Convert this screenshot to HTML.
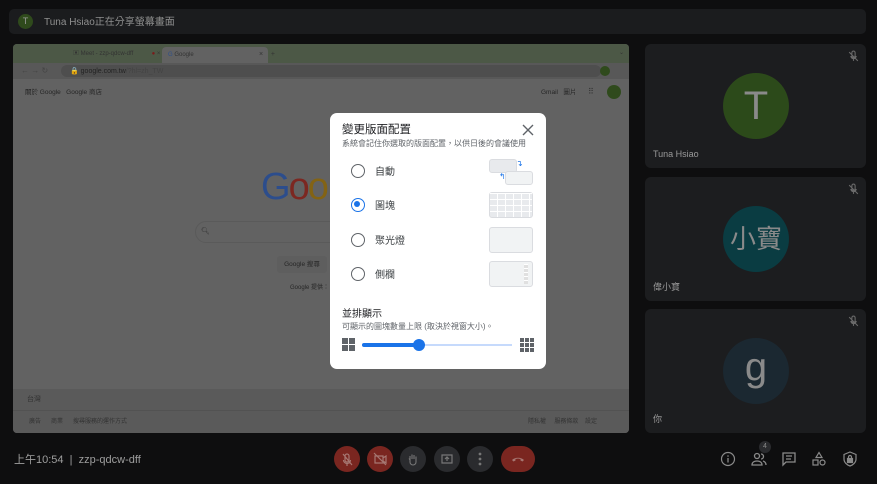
<!DOCTYPE html>
<html><head><meta charset="utf-8"><style>
*{margin:0;padding:0;box-sizing:border-box;line-height:1}
body{width:877px;height:484px;background:#0e0e0f;position:relative;overflow:hidden;font-family:"Liberation Sans","Noto Sans CJK TC",sans-serif}
.a{position:absolute}
.tile{position:absolute;left:645px;width:221px;height:124px;background:#1c1d1f;border-radius:6px}
.av{position:absolute;left:78px;top:29px;width:66px;height:66px;border-radius:50%;color:#8a8a8a;text-align:center;line-height:66px;font-size:40px}
.nm{position:absolute;left:8px;bottom:9px;color:#9a9a9a;font-size:9px}
.mic{position:absolute;right:6px;top:6px;width:13px;height:13px}
.rad{position:absolute;left:21px;width:14px;height:14px;border:1.6px solid #5f6368;border-radius:50%}
.lbl{position:absolute;left:45px;font-size:10px;color:#3c4043}
.thumb{position:absolute;left:159px;width:44px;height:26px;border:1px solid #dadce0;border-radius:3px;background:#f1f3f4}
.btn{position:absolute;top:446px;width:26px;height:26px;border-radius:50%;background:#2a2b2e}
.btn svg,.ri svg{display:block;margin:auto}
.ri{position:absolute;top:451px;width:16px;height:16px}
</style></head><body>
<div class="a" style="left:9px;top:9px;width:857px;height:25px;background:#1b1c1e;border-radius:5px"></div>
<div class="a" style="left:18px;top:14px;width:15px;height:15px;border-radius:50%;background:#2f4a1c;color:#999;font-size:9px;text-align:center;line-height:15px">T</div>
<div class="a" style="left:44px;top:18px;color:#8f8f8f;font-size:10px">Tuna Hsiao正在分享螢幕畫面</div>

<div class="a" style="left:13px;top:44px;width:616px;height:389px;background:#626262;border-radius:4px;overflow:hidden">
  <div class="a" style="left:0;top:0;width:616px;height:19px;background:#4c5846"></div>
  <div class="a" style="left:60px;top:7px;font-size:6px;color:#333">▣ Meet - zzp-qdcw-dff &nbsp;&nbsp;&nbsp;&nbsp;&nbsp;&nbsp;&nbsp;&nbsp;&nbsp;&nbsp;<span style="color:#7a1a1a">●</span> ×</div>
  <div class="a" style="left:149px;top:3px;width:106px;height:16px;background:#626262;border-radius:4px 4px 0 0"></div>
  <div class="a" style="left:155px;top:8px;font-size:6px;color:#333"><span style="color:#2d4f8a">G</span> Google</div>
  <div class="a" style="left:246px;top:7px;font-size:7px;color:#333">×&nbsp;&nbsp;&nbsp;&nbsp;+</div>
  <div class="a" style="left:606px;top:6px;font-size:6px;color:#333">⌄</div>
  <div class="a" style="left:0;top:19px;width:616px;height:16px;background:#585858"></div>
  <div class="a" style="left:8px;top:23px;font-size:8px;color:#444">← → ↻</div>
  <div class="a" style="left:48px;top:21px;width:540px;height:12px;border-radius:6px;background:#4e4e4e"></div>
  <div class="a" style="left:57px;top:24px;font-size:7px;color:#222">🔒 google.com.tw<span style="color:#444">/?hl=zh_TW</span></div>
  <div class="a" style="left:587px;top:22px;width:10px;height:10px;border-radius:50%;background:#2f4a1c"></div>
  <div class="a" style="left:12px;top:46px;font-size:6.5px;color:#262626">關於 Google &nbsp;&nbsp;Google 商店</div>
  <div class="a" style="left:528px;top:46px;font-size:6.5px;color:#262626">Gmail&nbsp;&nbsp;&nbsp;圖片</div>
  <div class="a" style="left:575px;top:44px;font-size:8px;color:#333">⠿</div>
  <div class="a" style="left:594px;top:41px;width:14px;height:14px;border-radius:50%;background:#2f4a1c"></div>
  <div class="a" style="left:248px;top:124px;font-size:38px;letter-spacing:-2px"><span style="color:#2c4d8c">G</span><span style="color:#7c2721">o</span><span style="color:#836314">o</span></div>
  <div class="a" style="left:182px;top:177px;width:200px;height:22px;border:1px solid #5a5a5a;border-radius:11px"></div>
  <div class="a" style="left:188px;top:184px;font-size:7px;color:#333">🔍︎</div>
  <div class="a" style="left:264px;top:212px;width:50px;height:17px;background:#5e5e5e;border-radius:3px;font-size:6.5px;color:#262626;text-align:center;line-height:17px">Google 搜尋</div>
  <div class="a" style="left:277px;top:241px;font-size:6px;color:#262626">Google 提供：</div>
  <div class="a" style="left:0;top:345px;width:616px;height:44px;background:#5a5a5a"></div>
  <div class="a" style="left:0;top:366px;width:616px;height:1px;background:#525252"></div>
  <div class="a" style="left:14px;top:352px;font-size:7px;color:#333">台灣</div>
  <div class="a" style="left:16px;top:375px;font-size:6px;color:#333">廣告 &nbsp;&nbsp;&nbsp;&nbsp;&nbsp;商業 &nbsp;&nbsp;&nbsp;&nbsp;&nbsp;搜尋服務的運作方式</div>
  <div class="a" style="left:515px;top:375px;font-size:6px;color:#333">隱私權 &nbsp;&nbsp;&nbsp;&nbsp;服務條款 &nbsp;&nbsp;&nbsp;設定</div>
</div>

<div class="tile" style="top:44px"><div class="av" style="background:#2c4a1a">T</div><div class="nm">Tuna Hsiao</div>
<svg class="mic" viewBox="0 0 24 24"><path d="M12 14a3 3 0 0 0 3-3V5a3 3 0 0 0-6 0v6a3 3 0 0 0 3 3zm5-3a5 5 0 0 1-10 0M12 16v4M4 4l16 16" stroke="#6a6a6a" stroke-width="2" fill="none"/></svg></div>
<div class="tile" style="top:177px"><div class="av" style="background:#0a3c42;font-size:26px">小寶</div><div class="nm">偉小寶</div>
<svg class="mic" viewBox="0 0 24 24"><path d="M12 14a3 3 0 0 0 3-3V5a3 3 0 0 0-6 0v6a3 3 0 0 0 3 3zm5-3a5 5 0 0 1-10 0M12 16v4M4 4l16 16" stroke="#6a6a6a" stroke-width="2" fill="none"/></svg></div>
<div class="tile" style="top:309px"><div class="av" style="background:#1b2831;line-height:58px">g</div><div class="nm">你</div>
<svg class="mic" viewBox="0 0 24 24"><path d="M12 14a3 3 0 0 0 3-3V5a3 3 0 0 0-6 0v6a3 3 0 0 0 3 3zm5-3a5 5 0 0 1-10 0M12 16v4M4 4l16 16" stroke="#6a6a6a" stroke-width="2" fill="none"/></svg></div>

<div class="a" style="left:330px;top:113px;width:216px;height:256px;background:#fff;border-radius:7px">
  <div class="a" style="left:12px;top:12px;font-size:11.5px;color:#202124">變更版面配置</div>
  <div class="a" style="left:12px;top:27px;font-size:8px;color:#5f6368">系統會記住你選取的版面配置，以供日後的會議使用</div>
  <svg class="a" style="left:192px;top:11px" width="12" height="12" viewBox="0 0 12 12"><path d="M1 1l10 10M11 1L1 11" stroke="#5f6368" stroke-width="1.4"/></svg>
  <div class="rad" style="top:51px"></div><div class="lbl" style="top:55px">自動</div>
  <div class="rad" style="top:85px;border-color:#1a73e8"><div style="position:absolute;left:2.4px;top:2.4px;width:6px;height:6px;border-radius:50%;background:#1a73e8"></div></div><div class="lbl" style="top:89px">圖塊</div>
  <div class="rad" style="top:120px"></div><div class="lbl" style="top:124px">聚光燈</div>
  <div class="rad" style="top:154px"></div><div class="lbl" style="top:158px">側欄</div>
  <div class="thumb" style="top:46px;width:28px;height:14px;background:#e8eaed"></div>
  <div class="thumb" style="top:58px;left:175px;width:28px;height:14px"></div>
  <div class="a" style="left:186px;top:47px;font-size:8px;color:#1a73e8">↴</div>
  <div class="a" style="left:169px;top:60px;font-size:8px;color:#1a73e8">↰</div>
  <div class="thumb" style="top:79px;background:repeating-linear-gradient(90deg,#e8eaed 0 7px,#fff 7px 8px),#e8eaed"><div style="position:absolute;inset:0;background:repeating-linear-gradient(0deg,transparent 0 5px,#fff 5px 6px)"></div></div>
  <div class="thumb" style="top:114px"></div>
  <div class="thumb" style="top:148px"><div style="position:absolute;right:4px;top:2px;width:4px;height:20px;background:repeating-linear-gradient(0deg,#e0e0e0 0 3px,#fff 3px 4px)"></div></div>
  <div class="a" style="left:12px;top:197px;font-size:10px;color:#202124">並排顯示</div>
  <div class="a" style="left:12px;top:210px;font-size:8px;color:#5f6368">可顯示的圖塊數量上限 (取決於視窗大小)。</div>
  <svg class="a" style="left:12px;top:225px" width="13" height="13" viewBox="0 0 13 13" fill="#5f6368"><rect x="0" y="0" width="6" height="6"/><rect x="7" y="0" width="6" height="6"/><rect x="0" y="7" width="6" height="6"/><rect x="7" y="7" width="6" height="6"/></svg>
  <div class="a" style="left:32px;top:231px;width:150px;height:2px;background:#c6dafc"></div>
  <div class="a" style="left:32px;top:230px;width:58px;height:4px;background:#1a73e8;border-radius:2px"></div>
  <div class="a" style="left:83px;top:226px;width:12px;height:12px;border-radius:50%;background:#1a73e8"></div>
  <svg class="a" style="left:190px;top:225px" width="14" height="14" viewBox="0 0 14 14" fill="#5f6368"><rect x="0" y="0" width="4" height="4"/><rect x="5" y="0" width="4" height="4"/><rect x="10" y="0" width="4" height="4"/><rect x="0" y="5" width="4" height="4"/><rect x="5" y="5" width="4" height="4"/><rect x="10" y="5" width="4" height="4"/><rect x="0" y="10" width="4" height="4"/><rect x="5" y="10" width="4" height="4"/><rect x="10" y="10" width="4" height="4"/></svg>
</div>

<div class="a" style="left:14px;top:455px;color:#9e9e9e;font-size:11px">上午10:54 &nbsp;|&nbsp; zzp-qdcw-dff</div>
<div class="btn" style="left:334px;background:#7a2620"><svg width="26" height="26" viewBox="-7 -7 26 26"><path d="M6 9a2 2 0 0 0 2-2V3a2 2 0 0 0-4 0v4a2 2 0 0 0 2 2zm3.5-2a3.5 3.5 0 0 1-7 0M6 11v2M2 1l9 11" stroke="#a67772" stroke-width="1.2" fill="none"/></svg></div>
<div class="btn" style="left:367px;background:#7a2620"><svg width="26" height="26" viewBox="-7 -7 26 26"><path d="M1 3h8v7H1zM9 5l3-2v7l-3-2M0 0l12 12" stroke="#a67772" stroke-width="1.2" fill="none"/></svg></div>
<div class="btn" style="left:400px"><svg width="26" height="26" viewBox="-7 -7 26 26"><path d="M3 7V3M5 6V1.5M7 6V2M9 7V3.5M3 7l-1-1.5M3 6v3a3 3 0 0 0 6 0V7" stroke="#777" stroke-width="1.1" fill="none"/></svg></div>
<div class="btn" style="left:434px"><svg width="26" height="26" viewBox="-7 -7 26 26"><path d="M1 2h10v8H1zM6 8V4M4 6l2-2 2 2" stroke="#777" stroke-width="1.2" fill="none"/></svg></div>
<div class="btn" style="left:467px"><svg width="26" height="26" viewBox="0 0 26 26" fill="#777"><circle cx="13" cy="8" r="1.4"/><circle cx="13" cy="13" r="1.4"/><circle cx="13" cy="18" r="1.4"/></svg></div>
<div class="btn" style="left:501px;width:34px;border-radius:13px;background:#7a2620"><svg width="34" height="26" viewBox="0 0 34 26"><path d="M11 14c3-3 9-3 12 0l-1.5 1.5-2-1v-1.5c-2-.5-3-.5-5 0v1.5l-2 1z" fill="#a67772"/></svg></div>
<div class="ri" style="left:720px"><svg width="16" height="16" viewBox="0 0 16 16"><circle cx="8" cy="8" r="6.5" stroke="#8a8a8a" stroke-width="1.2" fill="none"/><path d="M8 7v4.5" stroke="#8a8a8a" stroke-width="1.3"/><circle cx="8" cy="5" r=".8" fill="#8a8a8a"/></svg></div>
<div class="a" style="left:759px;top:441px;width:12px;height:12px;border-radius:50%;background:#2a2b2e;color:#8a8a8a;font-size:7px;text-align:center;line-height:12px">4</div>
<div class="ri" style="left:751px"><svg width="16" height="16" viewBox="0 0 16 16" fill="none" stroke="#8a8a8a" stroke-width="1.3"><circle cx="6" cy="5" r="2.5"/><path d="M1 14c0-3 2.5-4 5-4s5 1 5 4z"/><path d="M10 3a2.5 2.5 0 0 1 0 5M12 10c1.5.5 3 1.5 3 4"/></svg></div>
<div class="ri" style="left:781px"><svg width="16" height="16" viewBox="0 0 16 16" fill="none" stroke="#8a8a8a" stroke-width="1.3"><path d="M2 2h12v9H5l-3 3z"/><path d="M5 5h6M5 8h5"/></svg></div>
<div class="ri" style="left:811px"><svg width="16" height="16" viewBox="0 0 16 16" fill="none" stroke="#8a8a8a" stroke-width="1.2"><path d="M8 1.5l3 5H5z"/><rect x="2" y="9" width="5" height="5"/><circle cx="11.5" cy="11.5" r="2.5"/></svg></div>
<div class="ri" style="left:842px"><svg width="16" height="16" viewBox="0 0 16 16" fill="none" stroke="#8a8a8a" stroke-width="1.2"><path d="M8 1l6 2.5V8c0 3.5-3 6-6 7-3-1-6-3.5-6-7V3.5z"/><rect x="5.5" y="7.5" width="5" height="4" fill="#8a8a8a"/><path d="M6.5 7.5V6a1.5 1.5 0 0 1 3 0v1.5"/></svg></div>
</body></html>
